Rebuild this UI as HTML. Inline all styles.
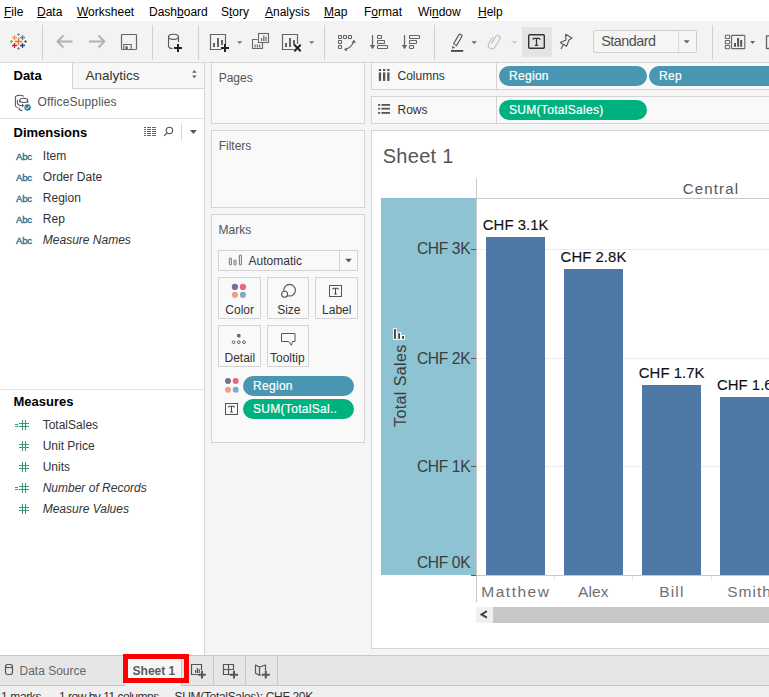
<!DOCTYPE html>
<html><head><meta charset="utf-8">
<style>
*{margin:0;padding:0;box-sizing:border-box}
html,body{width:769px;height:697px;overflow:hidden;background:#f5f5f5;font-family:"Liberation Sans",sans-serif;color:#333;position:relative}
.a{position:absolute}
.t{position:absolute;white-space:nowrap;line-height:1}
u{text-decoration:underline;text-underline-offset:1px}
.pill{position:absolute;height:20px;border-radius:10px}
</style></head>
<body>
<div class="a" style="left:0px;top:0px;width:769px;height:21px;background:#fff;"></div>
<div class="a" style="left:0px;top:21px;width:769px;height:41px;background:#f3f3f3;"></div>
<div class="a" style="left:0px;top:62px;width:769px;height:1px;background:#d9d9d9;"></div>
<div class="a" style="left:0px;top:63px;width:204px;height:592px;background:#fff;"></div>
<div class="a" style="left:204px;top:63px;width:1px;height:592px;background:#d4d4d4;"></div>
<div class="a" style="left:205px;top:63px;width:564px;height:592px;background:#f5f5f5;"></div>
<div class="a" style="left:42px;top:25px;width:1px;height:35px;background:#d0d0d0;"></div>
<div class="a" style="left:152px;top:25px;width:1px;height:35px;background:#d0d0d0;"></div>
<div class="a" style="left:198px;top:25px;width:1px;height:35px;background:#d0d0d0;"></div>
<div class="a" style="left:324px;top:25px;width:1px;height:35px;background:#d0d0d0;"></div>
<div class="a" style="left:434px;top:25px;width:1px;height:35px;background:#d0d0d0;"></div>
<div class="a" style="left:712px;top:25px;width:1px;height:35px;background:#d0d0d0;"></div>
<div class="a" style="left:593px;top:30px;width:104px;height:23px;background:#f5f5f5;border:1px solid #cfcfcf;border-radius:2px;box-sizing:border-box"></div>
<div class="a" style="left:678px;top:31px;width:1px;height:21px;background:#d9d9d9;"></div>
<span class="t" style="left:4px;top:5.84px;font-size:12px;color:#000;"><u>F</u>ile</span>
<span class="t" style="left:37px;top:5.84px;font-size:12px;color:#000;"><u>D</u>ata</span>
<span class="t" style="left:77px;top:5.84px;font-size:12px;color:#000;"><u>W</u>orksheet</span>
<span class="t" style="left:149px;top:5.84px;font-size:12px;color:#000;">Dash<u>b</u>oard</span>
<span class="t" style="left:221px;top:5.84px;font-size:12px;color:#000;">S<u>t</u>ory</span>
<span class="t" style="left:265px;top:5.84px;font-size:12px;color:#000;"><u>A</u>nalysis</span>
<span class="t" style="left:324px;top:5.84px;font-size:12px;color:#000;"><u>M</u>ap</span>
<span class="t" style="left:364px;top:5.84px;font-size:12px;color:#000;">F<u>o</u>rmat</span>
<span class="t" style="left:418px;top:5.84px;font-size:12px;color:#000;">Wi<u>n</u>dow</span>
<span class="t" style="left:478px;top:5.84px;font-size:12px;color:#000;"><u>H</u>elp</span>
<span class="t" style="left:601.2px;top:34.11px;font-size:14.4px;color:#505050;letter-spacing:-0.5px;">Standard</span>
<div class="a" style="left:72px;top:63px;width:132px;height:26px;background:#f7f7f7;border-left:1px solid #d4d4d4;border-bottom:1px solid #d4d4d4;box-sizing:border-box"></div>
<span class="t" style="left:13.5px;top:69.00px;font-size:13px;color:#000;font-weight:bold;">Data</span>
<span class="t" style="left:85.5px;top:68.57px;font-size:13.5px;color:#333;">Analytics</span>
<span class="t" style="left:37.5px;top:96.34px;font-size:12px;color:#555;letter-spacing:0.15px;">OfficeSupplies</span>
<div class="a" style="left:0px;top:118px;width:204px;height:1px;background:#e3e3e3;"></div>
<span class="t" style="left:13.5px;top:126.00px;font-size:13px;color:#000;font-weight:bold;">Dimensions</span>
<span class="t" style="left:16px;top:152.37px;font-size:9.6px;color:#2f6f8c;-webkit-text-stroke:0.35px #2c6c8a;letter-spacing:-0.25px;">Abc</span>
<span class="t" style="left:42.8px;top:149.84px;font-size:12px;color:#333;">Item</span>
<span class="t" style="left:16px;top:173.37px;font-size:9.6px;color:#2f6f8c;-webkit-text-stroke:0.35px #2c6c8a;letter-spacing:-0.25px;">Abc</span>
<span class="t" style="left:42.8px;top:170.84px;font-size:12px;color:#333;">Order Date</span>
<span class="t" style="left:16px;top:194.37px;font-size:9.6px;color:#2f6f8c;-webkit-text-stroke:0.35px #2c6c8a;letter-spacing:-0.25px;">Abc</span>
<span class="t" style="left:42.8px;top:191.84px;font-size:12px;color:#333;">Region</span>
<span class="t" style="left:16px;top:215.37px;font-size:9.6px;color:#2f6f8c;-webkit-text-stroke:0.35px #2c6c8a;letter-spacing:-0.25px;">Abc</span>
<span class="t" style="left:42.8px;top:212.84px;font-size:12px;color:#333;">Rep</span>
<span class="t" style="left:16px;top:236.37px;font-size:9.6px;color:#2f6f8c;-webkit-text-stroke:0.35px #2c6c8a;letter-spacing:-0.25px;">Abc</span>
<span class="t" style="left:42.8px;top:233.84px;font-size:12px;color:#333;font-style:italic;">Measure Names</span>
<div class="a" style="left:0px;top:389px;width:204px;height:1px;background:#e3e3e3;"></div>
<span class="t" style="left:13.5px;top:395.00px;font-size:13px;color:#000;font-weight:bold;">Measures</span>
<svg class="a" style="left:0;top:0" width="40" height="697"><path d="M22.5 420V430M25.5 420V430M19 423.5H29M19 426.5H29M15 424.5H18M15 426.5H18" stroke="#3a9b73" stroke-width="1.1"/></svg>
<span class="t" style="left:42.7px;top:418.84px;font-size:12px;color:#333;">TotalSales</span>
<svg class="a" style="left:0;top:0" width="40" height="697"><path d="M22.5 441V451M25.5 441V451M19 444.5H29M19 447.5H29" stroke="#3a9b73" stroke-width="1.1"/></svg>
<span class="t" style="left:42.7px;top:439.84px;font-size:12px;color:#333;">Unit Price</span>
<svg class="a" style="left:0;top:0" width="40" height="697"><path d="M22.5 462V472M25.5 462V472M19 465.5H29M19 468.5H29" stroke="#3a9b73" stroke-width="1.1"/></svg>
<span class="t" style="left:42.7px;top:460.84px;font-size:12px;color:#333;">Units</span>
<svg class="a" style="left:0;top:0" width="40" height="697"><path d="M22.5 483V493M25.5 483V493M19 486.5H29M19 489.5H29M15 487.5H18M15 489.5H18" stroke="#3a9b73" stroke-width="1.1"/></svg>
<span class="t" style="left:42.7px;top:481.84px;font-size:12px;color:#333;font-style:italic;">Number of Records</span>
<svg class="a" style="left:0;top:0" width="40" height="697"><path d="M22.5 504V514M25.5 504V514M19 507.5H29M19 510.5H29" stroke="#3a9b73" stroke-width="1.1"/></svg>
<span class="t" style="left:42.7px;top:502.84px;font-size:12px;color:#333;font-style:italic;">Measure Values</span>
<div class="a" style="left:211px;top:62px;width:154px;height:62px;background:#f9f9f9;border:1px solid #d4d4d4;box-sizing:border-box"></div>
<div class="a" style="left:211px;top:130px;width:154px;height:78px;background:#f9f9f9;border:1px solid #d4d4d4;box-sizing:border-box"></div>
<div class="a" style="left:211px;top:214px;width:154px;height:229px;background:#f9f9f9;border:1px solid #d4d4d4;box-sizing:border-box"></div>
<span class="t" style="left:218.7px;top:72.34px;font-size:12px;color:#555;">Pages</span>
<span class="t" style="left:218.7px;top:139.84px;font-size:12px;color:#555;">Filters</span>
<span class="t" style="left:218.5px;top:223.84px;font-size:12px;color:#555;">Marks</span>
<div class="a" style="left:218px;top:250px;width:140px;height:21px;background:#f9f9f9;border:1px solid #d4d4d4;box-sizing:border-box"></div>
<div class="a" style="left:339px;top:251px;width:1px;height:19px;background:#d4d4d4;"></div>
<span class="t" style="left:248.6px;top:255.34px;font-size:12px;color:#333;">Automatic</span>
<div class="a" style="left:218px;top:277px;width:43px;height:42px;background:#f9f9f9;border:1px solid #d4d4d4;box-sizing:border-box"></div>
<span class="t" style="left:225.3px;top:303.84px;font-size:12px;color:#333;">Color</span>
<div class="a" style="left:267px;top:277px;width:42px;height:42px;background:#f9f9f9;border:1px solid #d4d4d4;box-sizing:border-box"></div>
<span class="t" style="left:277.2px;top:303.84px;font-size:12px;color:#333;">Size</span>
<div class="a" style="left:315px;top:277px;width:43px;height:42px;background:#f9f9f9;border:1px solid #d4d4d4;box-sizing:border-box"></div>
<span class="t" style="left:322.1px;top:303.84px;font-size:12px;color:#333;">Label</span>
<div class="a" style="left:218px;top:325px;width:43px;height:42px;background:#f9f9f9;border:1px solid #d4d4d4;box-sizing:border-box"></div>
<span class="t" style="left:224.5px;top:351.84px;font-size:12px;color:#333;">Detail</span>
<div class="a" style="left:267px;top:325px;width:42px;height:42px;background:#f9f9f9;border:1px solid #d4d4d4;box-sizing:border-box"></div>
<span class="t" style="left:270px;top:351.84px;font-size:12px;color:#333;">Tooltip</span>
<div class="pill" style="left:243px;top:376px;width:111px;background:#4996b2"></div>
<span class="t" style="left:253px;top:380.04px;font-size:12px;color:#fff;letter-spacing:0.3px;-webkit-text-stroke:0.2px #fff;">Region</span>
<div class="pill" style="left:243px;top:399px;width:111px;background:#00b180"></div>
<span class="t" style="left:253px;top:403.04px;font-size:12px;color:#fff;letter-spacing:0.3px;-webkit-text-stroke:0.2px #fff;">SUM(TotalSal..</span>
<div class="a" style="left:371px;top:62px;width:400px;height:28px;background:#f9f9f9;border:1px solid #d4d4d4;box-sizing:border-box"></div>
<div class="a" style="left:496px;top:63px;width:1px;height:26px;background:#d4d4d4;"></div>
<div class="a" style="left:371px;top:96px;width:400px;height:28px;background:#f9f9f9;border:1px solid #d4d4d4;box-sizing:border-box"></div>
<div class="a" style="left:496px;top:97px;width:1px;height:26px;background:#d4d4d4;"></div>
<span class="t" style="left:397.5px;top:69.84px;font-size:12px;color:#333;">Columns</span>
<span class="t" style="left:397.5px;top:103.84px;font-size:12px;color:#333;">Rows</span>
<div class="pill" style="left:499px;top:66px;width:148px;background:#4996b2"></div>
<span class="t" style="left:509px;top:70.04px;font-size:12px;color:#fff;letter-spacing:0.3px;-webkit-text-stroke:0.2px #fff;">Region</span>
<div class="pill" style="left:649px;top:66px;width:140px;background:#4996b2"></div>
<span class="t" style="left:659px;top:70.04px;font-size:12px;color:#fff;letter-spacing:0.3px;-webkit-text-stroke:0.2px #fff;">Rep</span>
<div class="pill" style="left:499px;top:100px;width:148px;background:#00b180"></div>
<span class="t" style="left:509px;top:104.04px;font-size:12px;color:#fff;letter-spacing:0.3px;-webkit-text-stroke:0.2px #fff;">SUM(TotalSales)</span>
<div class="a" style="left:371px;top:130px;width:400px;height:519px;background:#fff;border:1px solid #d4d4d4;box-sizing:border-box"></div>
<span class="t" style="left:382.7px;top:146.07px;font-size:20px;color:#555;letter-spacing:0.3px;">Sheet 1</span>
<div class="a" style="left:381px;top:198px;width:95px;height:377px;background:#8dc3d2;"></div>
<div class="a" style="left:476px;top:178px;width:1px;height:424px;background:#c8c8c8;"></div>
<div class="a" style="left:476px;top:198px;width:293px;height:1px;background:#c8c8c8;"></div>
<span class="t" style="left:682.8px;top:181.30px;font-size:15px;color:#555;letter-spacing:1.15px;">Central</span>
<div class="a" style="left:477px;top:249px;width:292px;height:1px;background:#ececec;"></div>
<div class="a" style="left:471px;top:249px;width:5px;height:1px;background:#555;"></div>
<div class="a" style="left:477px;top:358px;width:292px;height:1px;background:#ececec;"></div>
<div class="a" style="left:471px;top:358px;width:5px;height:1px;background:#555;"></div>
<div class="a" style="left:477px;top:466px;width:292px;height:1px;background:#ececec;"></div>
<div class="a" style="left:471px;top:466px;width:5px;height:1px;background:#555;"></div>
<div class="a" style="left:471px;top:575px;width:5px;height:1px;background:#555;"></div>
<div class="a" style="left:486px;top:237px;width:59px;height:338px;background:#4e79a7;"></div>
<div class="a" style="left:564px;top:269px;width:59px;height:306px;background:#4e79a7;"></div>
<div class="a" style="left:642px;top:385px;width:59px;height:190px;background:#4e79a7;"></div>
<div class="a" style="left:720px;top:397px;width:59px;height:178px;background:#4e79a7;"></div>
<span class="t" style="left:482.8px;top:217.89px;font-size:14.9px;color:#111;letter-spacing:0.05px;-webkit-text-stroke:0.12px #111;">CHF 3.1K</span>
<span class="t" style="left:560.6px;top:249.89px;font-size:14.9px;color:#111;letter-spacing:0.05px;-webkit-text-stroke:0.12px #111;">CHF 2.8K</span>
<span class="t" style="left:638.8px;top:365.89px;font-size:14.9px;color:#111;letter-spacing:0.05px;-webkit-text-stroke:0.12px #111;">CHF 1.7K</span>
<span class="t" style="left:716.9px;top:377.89px;font-size:14.9px;color:#111;letter-spacing:0.05px;-webkit-text-stroke:0.12px #111;">CHF 1.6K</span>
<div class="a" style="left:476px;top:575px;width:293px;height:1px;background:#c8c8c8;"></div>
<span class="t" style="left:416.9px;top:241.39px;font-size:15.6px;color:#3d3d3d;letter-spacing:-0.35px;">CHF 3K</span>
<span class="t" style="left:416.9px;top:350.89px;font-size:15.6px;color:#3d3d3d;letter-spacing:-0.35px;">CHF 2K</span>
<span class="t" style="left:416.9px;top:459.09px;font-size:15.6px;color:#3d3d3d;letter-spacing:-0.35px;">CHF 1K</span>
<span class="t" style="left:416.9px;top:555.49px;font-size:15.6px;color:#3d3d3d;letter-spacing:-0.35px;">CHF 0K</span>
<span class="t" style="left:481.3px;top:583.88px;font-size:15.5px;color:#707070;letter-spacing:1.5px;">Matthew</span>
<span class="t" style="left:577.9px;top:583.88px;font-size:15.5px;color:#707070;letter-spacing:0.15px;">Alex</span>
<span class="t" style="left:659.2px;top:583.88px;font-size:15.5px;color:#707070;letter-spacing:1.2px;">Bill</span>
<span class="t" style="left:727.2px;top:583.88px;font-size:15.5px;color:#707070;letter-spacing:1.0px;">Smith</span>
<div class="a" style="left:554px;top:576px;width:1px;height:4px;background:#e6e6e6;"></div>
<div class="a" style="left:632px;top:576px;width:1px;height:4px;background:#e6e6e6;"></div>
<div class="a" style="left:711px;top:576px;width:1px;height:4px;background:#e6e6e6;"></div>
<div class="a" style="left:476px;top:607px;width:293px;height:16px;background:#f0f0f0;"></div>
<div class="a" style="left:493px;top:607px;width:276px;height:16px;background:#c8c8c8;"></div>
<span class="t" style="left:393px;top:427px;font-size:16px;color:#3d3d3d;letter-spacing:0.4px;transform-origin:0 0;transform:rotate(-90deg)">Total Sales</span>
<div class="a" style="left:0px;top:655px;width:769px;height:1px;background:#c8c8c8;"></div>
<div class="a" style="left:0px;top:656px;width:769px;height:29px;background:#e6e6e6;"></div>
<div class="a" style="left:0px;top:685px;width:769px;height:1px;background:#c8c8c8;"></div>
<div class="a" style="left:0px;top:686px;width:769px;height:11px;background:#f0f0f0;"></div>
<span class="t" style="left:19.5px;top:664.84px;font-size:12px;color:#666;">Data Source</span>
<div class="a" style="left:125px;top:656px;width:57px;height:30px;background:#f7f7f7;border-right:1px solid #c8c8c8;box-sizing:border-box"></div>
<span class="t" style="left:132.6px;top:664.84px;font-size:12px;color:#5a5a5a;font-weight:bold;">Sheet 1</span>
<div class="a" style="left:123px;top:654px;width:66px;height:29px;background:transparent;border:5px solid #f00;box-sizing:border-box"></div>
<div class="a" style="left:213px;top:656px;width:1px;height:29px;background:#c8c8c8;"></div>
<div class="a" style="left:245px;top:656px;width:1px;height:29px;background:#c8c8c8;"></div>
<div class="a" style="left:277px;top:656px;width:1px;height:29px;background:#c8c8c8;"></div>
<span class="t" style="left:-4.5px;top:690.84px;font-size:12px;color:#333;letter-spacing:-0.35px;">11 marks</span>
<span class="t" style="left:59px;top:690.84px;font-size:12px;color:#333;letter-spacing:-0.5px;">1 row by 11 columns</span>
<span class="t" style="left:174.5px;top:690.84px;font-size:12px;color:#333;letter-spacing:-0.32px;">SUM(TotalSales): CHF 20K</span>
<svg class="a" style="left:0;top:0" width="769" height="697" viewBox="0 0 769 697" fill="none">
<!-- tableau logo -->
<g stroke-width="1.3" stroke-linecap="butt">
<path d="M14.8 41.5H22.2M18.5 37.8V45.2" stroke="#e8762b" stroke-width="1.4"/>
<path d="M12 37.5H17M14.5 35V40" stroke="#eda03a"/>
<path d="M20 37.5H25M22.5 35V40" stroke="#5b879b"/>
<path d="M12 45.5H17M14.5 43V48" stroke="#c8203b"/>
<path d="M20 45.5H25M22.5 43V48" stroke="#1f4a84"/>
<path stroke-width="1" d="M17 34.5H20M18.5 33V36" stroke="#6c98a8"/>
<path stroke-width="1" d="M10 41.5H13M11.5 40V43" stroke="#6c98a8"/>
<path stroke-width="1" d="M24 41.5H27M25.5 40V43" stroke="#5d5d9c"/>
<path stroke-width="1" d="M17 48.5H20M18.5 47V50" stroke="#7c8bb4"/>
</g>
<!-- arrows -->
<path d="M72.5 41.5H58M63.5 35.5L57.5 41.5L63.5 47.5" stroke="#b0b0b0" stroke-width="1.8"/>
<path d="M89 41.5H104M98.5 35.5L104.5 41.5L98.5 47.5" stroke="#b0b0b0" stroke-width="1.8"/>
<!-- save -->
<rect x="121.5" y="34.5" width="15" height="15" rx="0.8" stroke="#666" stroke-width="1.2"/>
<path d="M123.8 49.5V44.5H131.2V49.5" stroke="#666" stroke-width="1.1"/>
<rect x="125.4" y="46.3" width="2.4" height="3.4" fill="#666"/>
<!-- cylinder + -->
<ellipse cx="173.5" cy="36.8" rx="5" ry="2.6" stroke="#555" stroke-width="1.1"/>
<path d="M168.5 36.8V45.5Q168.5 48.5 172.5 48.6M178.5 36.8V42" stroke="#555" stroke-width="1.1"/>
<path d="M174 47.9H182M178 43.9V51.9" stroke="#222" stroke-width="2"/>
<!-- new worksheet -->
<path d="M221.5 49.5H210.5V34.5H225.5V44" stroke="#666" stroke-width="1.2"/>
<rect x="213" y="43" width="2" height="4" fill="#666"/><rect x="217" y="38" width="2" height="9" fill="#666"/><rect x="221" y="40" width="2" height="5" fill="#666"/>
<path d="M221 47.9H229M225 43.9V51.9" stroke="#222" stroke-width="2"/>
<path d="M237 41.2H242.4L239.7 44Z" fill="#777"/>
<!-- duplicate -->
<path d="M257.5 39.5H252.5V48.5H262.5V43" stroke="#666" stroke-width="1.1"/>
<rect x="254.5" y="44.5" width="1.2" height="3" fill="#666"/><rect x="256.8" y="44.5" width="1.2" height="3" fill="#666"/><rect x="259.1" y="44.5" width="1.2" height="3" fill="#666"/>
<rect x="258.5" y="33.5" width="10" height="9" stroke="#666" stroke-width="1.1" fill="#f3f3f3"/>
<rect x="261" y="38" width="1.2" height="3" fill="#666"/><rect x="263.2" y="35.5" width="1.2" height="5.5" fill="#666"/><rect x="265.4" y="36.8" width="1.2" height="4.2" fill="#666"/>
<!-- clear sheet -->
<path d="M293.5 49.5H282.5V34.5H297.5V44" stroke="#666" stroke-width="1.2"/>
<rect x="285" y="43" width="2" height="4" fill="#666"/><rect x="289" y="38" width="2" height="9" fill="#666"/><rect x="293" y="40" width="2" height="5" fill="#666"/>
<path d="M294.3 44.8L300.7 51.2M300.7 44.8L294.3 51.2" stroke="#222" stroke-width="2"/>
<path d="M309 41.2H314.4L311.7 44Z" fill="#777"/>
<!-- swap -->
<g stroke="#666" stroke-width="1.1"><rect x="338.5" y="35.5" width="3" height="3" rx=".5"/><rect x="343.5" y="35.5" width="3" height="3" rx=".5"/><rect x="348.5" y="35.5" width="3" height="3" rx=".5"/><rect x="338.5" y="40.5" width="3" height="3" rx=".5"/><rect x="338.5" y="45.5" width="3" height="3" rx=".5"/>
<path d="M345 49.5Q352 47.5 353.8 41"/></g>
<path d="M351.5 42.5L354.2 39.5L355.8 43Z M346.5 47.5L343.8 49.8L347.2 51.2Z" fill="#666"/>
<!-- sort asc -->
<path d="M372.5 35V46" stroke="#666" stroke-width="1.2"/><path d="M369.8 45H375.2L372.5 49.3Z" fill="#666"/>
<g stroke="#666" stroke-width="1.1"><rect x="377.5" y="35.5" width="4" height="3" rx=".6"/><rect x="377.5" y="40.5" width="7" height="3" rx=".6"/><rect x="377.5" y="45.5" width="10" height="3" rx=".6"/></g>
<!-- sort desc -->
<path d="M404.5 35V46" stroke="#666" stroke-width="1.2"/><path d="M401.8 45H407.2L404.5 49.3Z" fill="#666"/>
<g stroke="#666" stroke-width="1.1"><rect x="409.5" y="35.5" width="10" height="3" rx=".6"/><rect x="409.5" y="40.5" width="7" height="3" rx=".6"/><rect x="409.5" y="45.5" width="4" height="3" rx=".6"/></g>
<!-- highlighter -->
<path d="M453.6 43.9L459.1 34.4Q459.5 33.9 460.1 34.2L461.9 35.3Q462.3 35.7 462 36.2L456.5 45.6Z" stroke="#555" stroke-width="1.1" stroke-linejoin="round"/>
<path d="M453.3 46L452.2 48.2L454.8 47.3" stroke="#555" stroke-width="1"/>
<rect x="451" y="50" width="12.2" height="1.8" fill="#444"/>
<path d="M471.5 41.2H476.9L474.2 44Z" fill="#666"/>
<!-- paperclip -->
<g transform="translate(494.2 41.5) rotate(32)"><path d="M-1.3 3.5V-4.3Q-1.3 -7.3 1.2 -7.3Q3.6 -7.3 3.6 -4.3V4.3Q3.6 8 0 8Q-3.6 8 -3.6 4.3V-3" stroke="#bdbdbd" stroke-width="1.1"/></g>
<path d="M511.8 41.2H517.2L514.5 44Z" fill="#c8c8c8"/>
<!-- T button -->
<rect x="522" y="27" width="30" height="30" fill="#e4e4e4"/>
<rect x="528.7" y="34.7" width="15.6" height="13.6" rx="1" stroke="#333" stroke-width="1.4"/>
<path d="M533.3 38.3H539.7M533.3 38.3V39.8M539.7 38.3V39.8M536.5 38.3V45.4M534.8 45.4H538.2" stroke="#333" stroke-width="1.3"/>
<!-- pin -->
<path d="M565.6 34.3L572 38L569 40L566.5 46.2L563.2 44.3L560.3 42.6L566 40Z M563.5 44.5L561 49" stroke="#555" stroke-width="1.1" stroke-linejoin="round"/>
<!-- standard caret -->
<path d="M683.6 40.2H689.8L686.7 43.6Z" fill="#666"/>
<!-- show me -->
<g stroke="#666" stroke-width="1.1"><rect x="725.3" y="35.3" width="4.4" height="3.2" rx=".7"/><rect x="725.3" y="40.5" width="4.4" height="3.2" rx=".7"/><rect x="725.3" y="45.5" width="4.4" height="3.2" rx=".7"/><rect x="731.6" y="35.4" width="13.2" height="13.2" rx=".7"/></g>
<rect x="734" y="43" width="2" height="3.8" fill="#555"/><rect x="737.1" y="38" width="2" height="8.8" fill="#555"/><rect x="740.2" y="40" width="2" height="6.8" fill="#555"/>
<path d="M750.1 41.1H755.1L752.6 43.9Z" fill="#666"/>
<path d="M766 35.8H769M766.5 35.5V48.5H769" stroke="#666" stroke-width="1.3"/>
<!-- datasource icon -->
<path d="M23.8 96.4Q22.5 95.2 19.5 95.2Q15.4 95.2 15.4 97.5V105.5Q15.4 107 17.8 107.6" stroke="#555" stroke-width="1.05"/>
<path d="M17.3 99.8V102.6Q17.3 105.1 20.2 105.4H23" stroke="#555" stroke-width="1.05"/>
<path d="M22 103.6L24.2 105.4L22 107.2Z" fill="#555"/>
<path d="M19.2 107.4V109.3Q19.2 110.6 22.3 110.6" stroke="#555" stroke-width="1.05"/>
<ellipse cx="23.7" cy="100.3" rx="4" ry="2.1" stroke="#555" stroke-width="1.05"/>
<path d="M19.7 100.3V102.6M27.7 100.3V103" stroke="#555" stroke-width="1.05"/>
<circle cx="27.6" cy="107.4" r="3.7" fill="#2b7a99" stroke="#fff" stroke-width="0.8"/>
<path d="M25.7 107.3L27.1 108.8L29.5 105.9" stroke="#fff" stroke-width="1"/>
<!-- dimension header icons -->
<g fill="#666"><rect x="144" y="127" width="2" height="1"/><rect x="147" y="127" width="4" height="1"/><rect x="152" y="127" width="4" height="1"/>
<rect x="144" y="129" width="2" height="1"/><rect x="147" y="129" width="4" height="1"/><rect x="152" y="129" width="4" height="1"/>
<rect x="144" y="131" width="2" height="1"/><rect x="147" y="131" width="4" height="1"/><rect x="152" y="131" width="4" height="1"/>
<rect x="144" y="133" width="2" height="1"/><rect x="147" y="133" width="4" height="1"/><rect x="152" y="133" width="4" height="1"/>
<rect x="144" y="135" width="2" height="1"/><rect x="147" y="135" width="4" height="1"/><rect x="152" y="135" width="4" height="1"/></g>
<circle cx="169.4" cy="130.4" r="3.2" stroke="#555" stroke-width="1.1"/>
<path d="M167.2 132.7L164.2 135.8" stroke="#555" stroke-width="1.2"/>
<rect x="181" y="123.5" width="1" height="17" fill="#d8d8d8"/>
<path d="M190 130.1H196.8L193.4 133.9Z" fill="#555"/>
<!-- analytics updown -->
<path d="M192 72.8H196.6L194.3 70Z M192 75.4H196.6L194.3 78.2Z" fill="#666"/>
<!-- marks automatic icon -->
<g stroke="#666" stroke-width="0.9"><rect x="229.4" y="258.3" width="2" height="6.5" rx=".3"/><rect x="234" y="260.3" width="2" height="4.5" rx=".3"/><rect x="239.4" y="255.2" width="2" height="9.6" rx=".3"/></g>
<path d="M345.4 258.8H351.8L348.6 262.6Z" fill="#555"/>
<!-- color dots -->
<circle cx="234.9" cy="286.9" r="3.1" fill="#7d6b98"/><circle cx="242.9" cy="286.9" r="3.1" fill="#e8657a"/><circle cx="234.9" cy="294.8" r="3.1" fill="#eba27c"/><circle cx="242.9" cy="294.8" r="3.1" fill="#80a9cf"/>
<!-- size -->
<circle cx="289.6" cy="290.2" r="5.8" stroke="#555" stroke-width="1.1"/>
<circle cx="284.6" cy="294.2" r="3" stroke="#555" stroke-width="1.1" fill="#f9f9f9"/>
<!-- label T -->
<rect x="329.5" y="285.5" width="12" height="11" stroke="#555" stroke-width="1"/>
<path d="M332.8 288.3H338.2M332.8 288.3V289.5M338.2 288.3V289.5M335.5 288.3V294M334.2 294H336.8" stroke="#444" stroke-width="1"/>
<!-- detail -->
<circle cx="238.8" cy="335.7" r="1.9" fill="#666"/>
<circle cx="233.6" cy="342.2" r="1.4" stroke="#555" stroke-width=".9"/><circle cx="238.8" cy="342.2" r="1.4" stroke="#555" stroke-width=".9"/><circle cx="244" cy="342.2" r="1.4" stroke="#555" stroke-width=".9"/>
<!-- tooltip -->
<path d="M281.5 333.5H295V341.5H292.3L291.5 345.3L288.5 341.5H281.5Z" stroke="#555" stroke-width="1" stroke-linejoin="round"/>
<!-- region dots -->
<circle cx="228" cy="381.1" r="3" fill="#7d6b98"/><circle cx="235.7" cy="381.1" r="3" fill="#e8657a"/><circle cx="228" cy="389.7" r="3" fill="#eba27c"/><circle cx="235.7" cy="389.7" r="3" fill="#80a9cf"/>
<!-- T icon -->
<rect x="225.5" y="403.5" width="12" height="11" stroke="#555" stroke-width="1"/>
<path d="M228.8 406.3H234.2M228.8 406.3V407.5M234.2 406.3V407.5M231.5 406.3V412M230.2 412H232.8" stroke="#444" stroke-width="1"/>
<!-- columns iii -->
<g fill="#555"><rect x="378.8" y="69" width="2.3" height="2"/><rect x="383" y="69" width="2.3" height="2"/><rect x="387.2" y="69" width="2.3" height="2"/>
<rect x="378.8" y="72.4" width="2.3" height="8.5"/><rect x="383" y="72.4" width="2.3" height="8.5"/><rect x="387.2" y="72.4" width="2.3" height="8.5"/></g>
<!-- rows -->
<g fill="#555"><rect x="378.1" y="104" width="2" height="1.8"/><rect x="381.4" y="104" width="8.6" height="1.8"/>
<rect x="378.1" y="107.8" width="2" height="1.8"/><rect x="381.4" y="107.8" width="8.6" height="1.8"/>
<rect x="378.1" y="112" width="2" height="1.8"/><rect x="381.4" y="112" width="8.6" height="1.8"/></g>
<!-- axis bar icon -->
<g fill="#444" stroke="#fff" stroke-width="1"><rect x="393.5" y="328.6" width="2.9" height="10.8"/><rect x="397.7" y="332.7" width="2.9" height="6.7"/><rect x="401.6" y="335.5" width="2.9" height="3.9"/></g>
<!-- scroll arrow -->
<path d="M486.9 611.2L481.5 614.4L486.9 617.7" stroke="#444" stroke-width="2"/>
<!-- data source cylinder -->
<rect x="5.5" y="664.5" width="7" height="10" rx="2.2" stroke="#555" stroke-width="1.2"/>
<path d="M5.8 667.5H12.2" stroke="#555" stroke-width="1.1"/>
<!-- new sheet tab icon -->
<path d="M198 674.5H191.5V664.5H201.5V670" stroke="#555" stroke-width="1.2"/>
<rect x="195" y="670" width="1.2" height="3" fill="#555"/><rect x="196.8" y="668" width="1.2" height="5" fill="#555"/><rect x="198.6" y="669" width="1.2" height="4" fill="#555"/>
<path d="M198.2 674.7H205.8M202 670.8V678.6" stroke="#555" stroke-width="2"/>
<!-- dashboard tab icon -->
<path d="M230 674.5H223.5V664.5H233.5V670M223.5 669.5H233.5M228.5 664.5V674.5" stroke="#555" stroke-width="1.2"/>
<path d="M230 674.7H238M234 670.8V678.6" stroke="#555" stroke-width="2"/>
<!-- story tab icon -->
<path d="M255.5 665L259.5 667V675.2L255.5 673.2Z M259.5 667L265.5 665V670.5M259.5 675.2L261 674.7" stroke="#555" stroke-width="1.2" stroke-linejoin="round"/>
<path d="M261.8 674.7H269.8M265.8 670.8V678.6" stroke="#555" stroke-width="2"/>
</svg>
</body></html>
